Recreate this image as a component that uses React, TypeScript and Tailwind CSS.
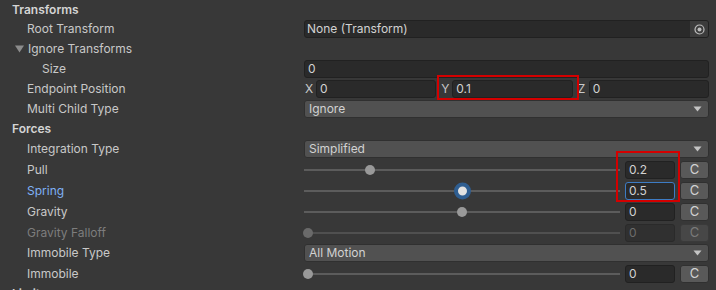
import React from "react";

const FONT = { fontFamily: "Inter, 'Noto Sans', sans-serif" };

function Label({ text, indent = 27, color = "text-[#c8c8c8]", bold = false }: { text: string; indent?: number; color?: string; bold?: boolean }) {
  return (
    <div className={`w-[304px] shrink-0 flex items-center ${color} ${bold ? "font-bold" : ""}`} style={{ paddingLeft: indent }}>
      {text}
    </div>
  );
}

function Header({ text }: { text: string }) {
  return (
    <div className="flex items-center h-[20px] pl-[12px] font-semibold text-[#d4d4d4]">{text}</div>
  );
}

function TextField({ value, className = "" }: { value: string; className?: string }) {
  return (
    <div className={`h-[18px] flex items-center pl-[3px] rounded-[3px] bg-[#2a2a2a] border border-[#212121] text-[#d2d2d2] ${className}`}>
      {value}
    </div>
  );
}

function Dropdown({ value }: { value: string }) {
  return (
    <div className="w-[405px] h-[18px] flex items-center justify-between pl-[4px] pr-[6px] rounded-[3px] bg-[#515151] border border-[#303030] text-[#d2d2d2]">
      <span>{value}</span>
      <svg width="9" height="6" viewBox="0 0 9 6"><path d="M0.5 0.5 L8.5 0.5 L4.5 5.5 Z" fill="#c4c4c4" /></svg>
    </div>
  );
}

function Slider({ frac, focus = false, disabled = false, value }: { frac: number; focus?: boolean; disabled?: boolean; value: string }) {
  const center = 4 + frac * 308;
  const r = focus ? 8.5 : 5;
  return (
    <div className="flex items-center w-[405px]">
      <div className="relative w-[316px] h-[20px] flex items-center">
        <div className={`w-full h-[2px] ${disabled ? "bg-[#505050]" : "bg-[#5c5c5c]"}`} />
        {focus ? (
          <div
            className="absolute top-1/2 -translate-y-1/2 w-[17px] h-[17px] rounded-full border-[4px] border-[#2f5e91] bg-[#e2e2e2]"
            style={{ left: center - r }}
          />
        ) : (
          <div
            className={`absolute top-1/2 -translate-y-1/2 w-[10px] h-[10px] rounded-full ${disabled ? "bg-[#6a6a6a]" : "bg-[#999999]"}`}
            style={{ left: center - r }}
          />
        )}
      </div>
      <div
        className={`ml-[5px] w-[50px] h-[18px] flex items-center pl-[3px] rounded-[3px] border ${
          focus ? "border-[#3d7cc4] bg-[#2a2a2a] text-[#d2d2d2]" : disabled ? "border-[#2a2a2a] bg-[#303030] text-[#6c6c6c]" : "border-[#212121] bg-[#2a2a2a] text-[#d2d2d2]"
        }`}
      >
        {value}
      </div>
      <div
        className={`ml-[5px] w-[29px] h-[18px] flex items-center justify-center rounded-[3px] border text-[13px] ${
          disabled ? "bg-[#474747] border-[#3a3a3a] text-[#7a7a7a]" : "bg-[#595959] border-[#303030] text-[#d2d2d2]"
        }`}
      >
        C
      </div>
    </div>
  );
}

function Row({ h = 20, children }: { h?: number; children: React.ReactNode }) {
  return (
    <div className="flex items-center" style={{ height: h }}>
      {children}
    </div>
  );
}

export default function App() {
  return (
    <div className="relative w-[716px] h-[290px] overflow-hidden bg-[#383838] text-[12px] leading-none" style={FONT}>
      <div className="h-[19px] flex items-center pl-[12px] font-semibold text-[#d4d4d4] pt-[1px]">Transforms</div>
      <Row>
        <Label text="Root Transform" />
        <div className="w-[405px] h-[18px] flex items-center rounded-[3px] bg-[#2a2a2a] border border-[#212121] text-[#d2d2d2]">
          <span className="pl-[2px] flex-1">None (Transform)</span>
          <div className="w-[18px] h-full flex items-center justify-center bg-[#3c3c3c] rounded-r-[2px]">
            <svg width="11" height="11" viewBox="0 0 11 11">
              <circle cx="5.5" cy="5.5" r="4.5" fill="none" stroke="#bdbdbd" strokeWidth="1.2" />
              <circle cx="5.5" cy="5.5" r="2" fill="#bdbdbd" />
            </svg>
          </div>
        </div>
      </Row>
      <Row>
        <div className="w-[304px] shrink-0 flex items-center pl-[15px] text-[#c8c8c8]">
          <svg width="9" height="8" viewBox="0 0 9 8" className="mr-[4px]">
            <path d="M0 0.5 L9 0.5 L4.5 7.5 Z" fill="#8c8c8c" />
          </svg>
          Ignore Transforms
        </div>
      </Row>
      <Row>
        <Label text="Size" indent={42} />
        <TextField value="0" className="w-[405px]" />
      </Row>
      <Row>
        <Label text="Endpoint Position" />
        <div className="w-[405px] grid grid-cols-3 gap-[4px] text-[#c8c8c8]">
          {[["X", "0"], ["Y", "0.1"], ["Z", "0"]].map(([l, v]) => (
            <div key={l} className="flex items-center">
              <div className="w-[12px] shrink-0 pl-[1px]">{l}</div>
              <TextField value={v} className="flex-1" />
            </div>
          ))}
        </div>
      </Row>
      <Row>
        <Label text="Multi Child Type" />
        <Dropdown value="Ignore" />
      </Row>
      <Header text="Forces" />
      <Row>
        <Label text="Integration Type" />
        <Dropdown value="Simplified" />
      </Row>
      <Row h={21}>
        <Label text="Pull" />
        <Slider frac={0.2} value="0.2" />
      </Row>
      <Row h={21}>
        <Label text="Spring" color="text-[#7fb0f5]" />
        <Slider frac={0.5} focus value="0.5" />
      </Row>
      <Row h={21}>
        <Label text="Gravity" />
        <Slider frac={0.5} value="0" />
      </Row>
      <Row h={21}>
        <Label text="Gravity Falloff" color="text-[#7d7d7d]" />
        <Slider frac={0} disabled value="0" />
      </Row>
      <Row>
        <Label text="Immobile Type" />
        <Dropdown value="All Motion" />
      </Row>
      <Row h={21}>
        <Label text="Immobile" />
        <Slider frac={0} value="0" />
      </Row>
      <Header text="Limits" />

      <div className="absolute left-[437px] top-[75px] w-[142px] h-[25px] border-2 border-[#d40000] pointer-events-none" />
      <div className="absolute left-[616px] top-[151px] w-[64px] h-[51px] border-2 border-[#d40000] pointer-events-none" />
    </div>
  );
}
